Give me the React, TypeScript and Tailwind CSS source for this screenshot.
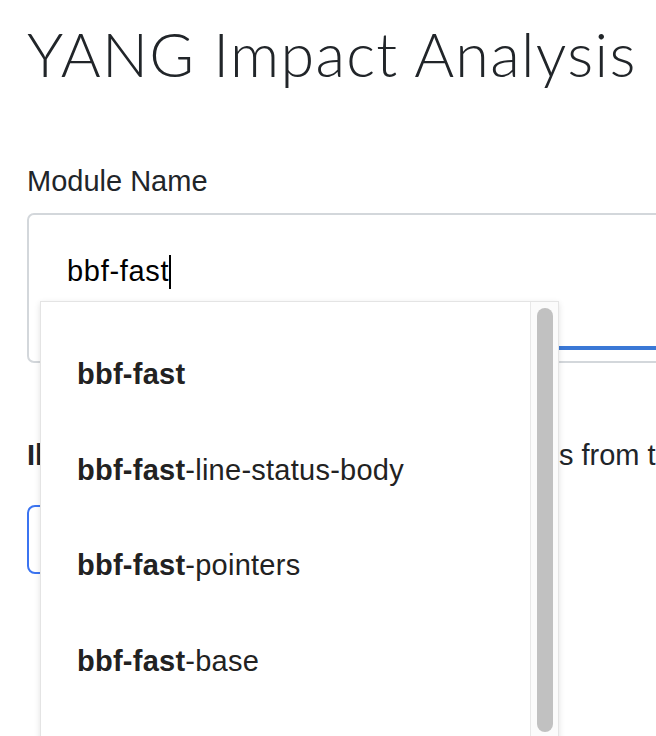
import React from 'react';

const suggestions = [
  { match: 'bbf-fast', rest: '' },
  { match: 'bbf-fast', rest: '-line-status-body' },
  { match: 'bbf-fast', rest: '-pointers' },
  { match: 'bbf-fast', rest: '-base' },
  { match: 'bbf-fast', rest: '-fastdsl' },
];

function SuggestionList() {
  return (
    <div className="absolute left-[11px] top-[86px] z-10 flex h-[460px] w-[519px] border border-[#e4e4e4] bg-white shadow-[0_2px_6px_rgba(0,0,0,0.12)]">
      <ul className="flex-1 overflow-hidden pt-[25px]">
        {suggestions.map((s, idx) => (
          <li key={idx} className="py-[26px] pl-[36px] text-[29px] leading-[43.5px] tracking-[0.25px] text-[#222]">
            <span className="font-bold">{s.match}</span>
            {s.rest}
          </li>
        ))}
      </ul>
      {/* scrollbar */}
      <div className="flex w-[28px] justify-center border-l border-[#e8e8e8] bg-[#fbfbfb] pt-[6px]">
        <div className="h-[424px] w-[16px] rounded-full bg-[#c1c1c1]" />
      </div>
    </div>
  );
}

export default function App() {
  return (
    <div className="h-[736px] w-[656px] overflow-hidden bg-white font-['Liberation_Sans',Arial,sans-serif] text-[#212529]">
      <div className="w-[900px] pl-[27px]">
        <h1 className="pt-[17px] font-['Lato',sans-serif] text-[61px] font-light leading-[1.2] tracking-[1.3px] text-[#212529]">
          YANG Impact Analysis
        </h1>

        <label className="mt-[70px] block text-[29px] leading-[43.5px]">Module Name</label>

        <div className="relative mt-[9.5px] h-[150px] w-[800px] rounded-[7px] border-2 border-[#d3d7db]">
          <div className="flex items-center pl-[38px] pt-[35px] text-[29px] leading-[43.5px] tracking-[0.7px] text-black">
            <span>bbf-fast</span>
            <span className="h-[34px] w-[2px] bg-black" />
          </div>
          <div className="absolute bottom-[11px] left-[13px] right-0 h-[4px] bg-[#3a78d6]" />
          <SuggestionList />
        </div>

        <p className="mt-[71px] whitespace-nowrap text-[29px] leading-[43.5px]">
          <span className="font-bold">Illustrate</span> impact of all dependent modules from the IETF
        </p>

        <div className="mt-[27.5px] h-[69px] w-[420px] rounded-[8px] border-2 border-[#3b74f1]" />
      </div>
    </div>
  );
}
